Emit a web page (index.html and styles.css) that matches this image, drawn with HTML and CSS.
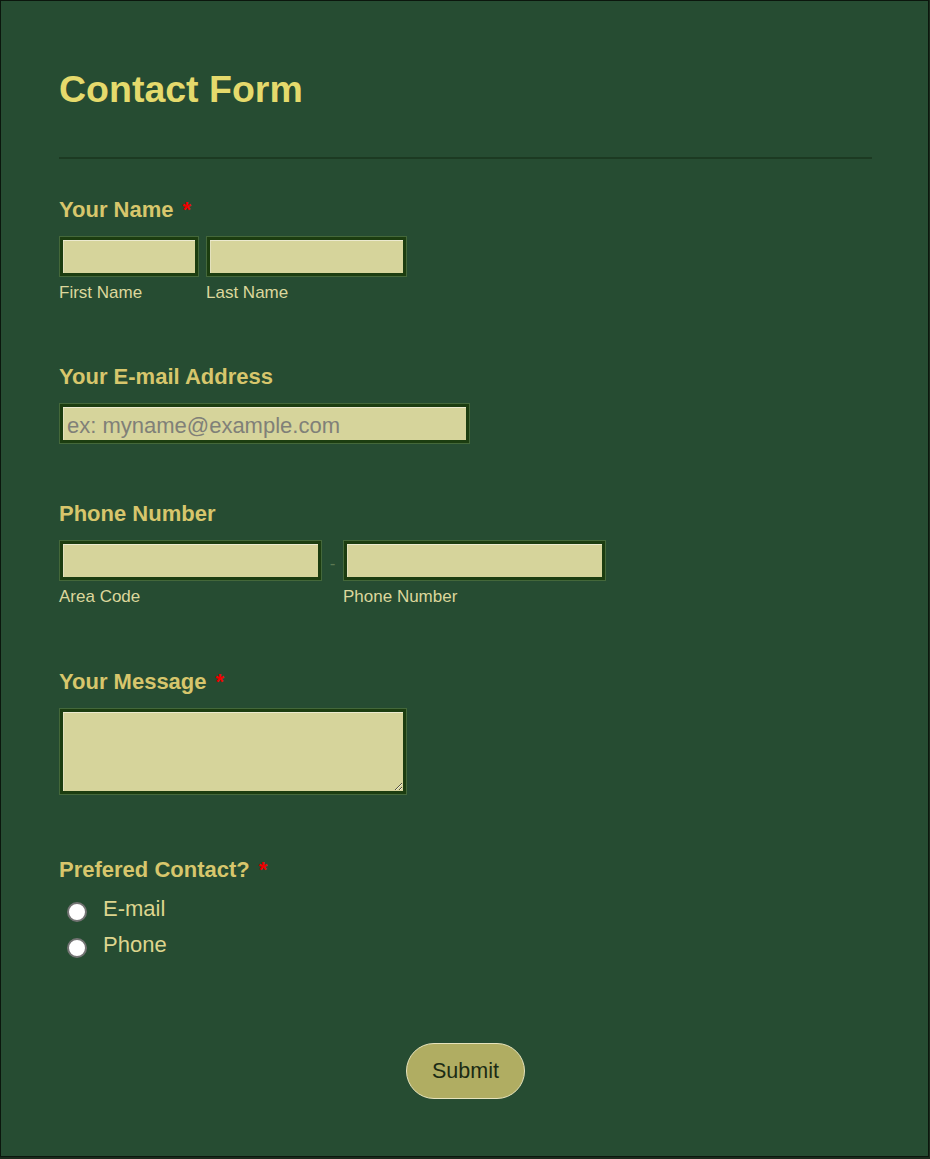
FILE: index.html
```html
<!DOCTYPE html>
<html lang="en">
<head>
    <meta charset="UTF-8">
    <meta name="viewport" content="width=device-width, initial-scale=1.0">
    <title>Contact Form</title>
    <link rel="stylesheet" href="styles.css">
</head>
<body>
    <form class="form-all" onsubmit="return false;">
        <div class="form-header-group">
            <h1 class="form-header">Contact Form</h1>
        </div>

        <div class="form-line line-name">
            <label class="form-label" for="first_name">Your Name<span class="form-required">*</span></label>
            <div class="form-input">
                <span class="sub-field">
                    <input class="form-textbox first-name" type="text" id="first_name" name="first_name">
                    <label class="form-sub-label" for="first_name">First Name</label>
                </span>
                <span class="sub-field">
                    <input class="form-textbox last-name" type="text" id="last_name" name="last_name">
                    <label class="form-sub-label" for="last_name">Last Name</label>
                </span>
            </div>
        </div>

        <div class="form-line line-email">
            <label class="form-label" for="email">Your E-mail Address</label>
            <div class="form-input">
                <input class="form-textbox email" type="email" id="email" name="email" placeholder="ex: myname@example.com">
            </div>
        </div>

        <div class="form-line line-phone">
            <label class="form-label" for="area_code">Phone Number</label>
            <div class="form-input">
                <span class="sub-field">
                    <input class="form-textbox phone" type="tel" id="area_code" name="area_code">
                    <label class="form-sub-label" for="area_code">Area Code</label>
                </span>
                <span class="phone-separator">-</span>
                <span class="sub-field">
                    <input class="form-textbox phone" type="tel" id="phone" name="phone">
                    <label class="form-sub-label" for="phone">Phone Number</label>
                </span>
            </div>
        </div>

        <div class="form-line line-message">
            <label class="form-label" for="message">Your Message<span class="form-required">*</span></label>
            <div class="form-input">
                <textarea class="form-textarea" id="message" name="message"></textarea>
            </div>
        </div>

        <div class="form-line line-contact">
            <label class="form-label">Prefered Contact?<span class="form-required">*</span></label>
            <div class="form-radios">
                <label class="form-radio-item">
                    <input class="form-radio" type="radio" name="contact" value="E-mail">
                    <span>E-mail</span>
                </label>
                <label class="form-radio-item">
                    <input class="form-radio" type="radio" name="contact" value="Phone">
                    <span>Phone</span>
                </label>
            </div>
        </div>

        <div class="form-buttons">
            <button class="form-submit-button" type="submit">Submit</button>
        </div>
    </form>
</body>
</html>
```

FILE: styles.css
```css
body {
    margin: 0;
    padding: 0;
    background-color: #1b2a1c;
    font-family: "Liberation Sans", Arial, sans-serif;
}
.form-all {
    box-sizing: border-box;
    width: 929px;
    margin: 0;
    padding: 0 56px 57px 58px;
    background-color: #264c32;
    border: 1px solid #0b160d;
}
.form-header-group {
    padding: 66px 0 46px;
    border-bottom: 2px solid #1c3a22;
}
.form-header {
    margin: 0;
    font-size: 37.5px;
    line-height: 44px;
    font-weight: bold;
    color: #e5da6c;
}

/* vertical rhythm between the questions */
.line-name {
    margin-top: 37px;
}
.line-email {
    margin-top: 60px;
}
.line-phone {
    margin-top: 56px;
}
.line-message {
    margin-top: 61px;
}
.line-contact {
    margin-top: 61px;
}

.form-label {
    display: block;
    padding-top: 1px;
    margin-bottom: 13px;
    font-size: 22px;
    line-height: 26px;
    font-weight: bold;
    color: #d7c66c;
}
.form-required {
    margin-left: 9px;
    color: #f00000;
}
.form-input {
    display: flex;
    align-items: flex-start;
}
.sub-field {
    display: flex;
    flex-direction: column;
    margin-right: 7px;
}
.form-sub-label {
    margin-top: 5px;
    padding-top: 1px;
    font-size: 17px;
    line-height: 20px;
    color: #dcd79c;
}
.form-textbox,
.form-textarea {
    box-sizing: border-box;
    margin: 1px;
    border: 3px solid #1c3d10;
    border-radius: 0;
    background-color: #d6d49b;
    box-shadow: 0 0 0 1px #44683a, inset 0 1px 0 #eceacf, inset 1px 0 0 #e3e1bd;
    font-family: "Liberation Sans", Arial, sans-serif;
    font-size: 22px;
    color: #222;
    outline: none;
}
.form-textbox {
    height: 39px;
    padding: 4px 4px 0;
}
.form-textbox::placeholder {
    color: #808078;
}
.first-name {
    width: 138px;
}
.last-name {
    width: 199px;
}
.email {
    width: 409px;
}
.phone {
    width: 261px;
}
.line-phone .sub-field {
    margin-right: 0;
}
.phone-separator {
    width: 21px;
    padding-top: 3px;
    line-height: 41px;
    font-size: 17px;
    text-align: center;
    color: #5a7852;
}
.form-textarea {
    display: block;
    width: 346px;
    height: 85px;
    padding: 4px;
    resize: both;
}
.form-radios {
    display: flex;
    flex-direction: column;
    gap: 10px;
}
.form-radio-item {
    display: flex;
    align-items: flex-start;
    font-size: 22px;
    line-height: 26px;
    color: #ddd58e;
    cursor: pointer;
}
.form-radio {
    appearance: none;
    -webkit-appearance: none;
    box-sizing: border-box;
    width: 20px;
    height: 20px;
    margin: 6px 16px 0 8px;
    border: 2px solid #747474;
    border-radius: 50%;
    background-color: #fff;
}
.form-radio:checked {
    background: radial-gradient(circle, #264c32 40%, #fff 45%);
}
.form-buttons {
    display: flex;
    justify-content: center;
    margin-top: 85px;
}
.form-submit-button {
    padding: 14px 25px;
    font-family: "Liberation Sans", Arial, sans-serif;
    font-size: 21.5px;
    line-height: 26px;
    color: #1b2b14;
    background-color: #b0ad62;
    border: 1px solid #e6e3bd;
    border-radius: 28px;
    cursor: pointer;
}
.form-submit-button:hover {
    background-color: #bcb96d;
}
```
